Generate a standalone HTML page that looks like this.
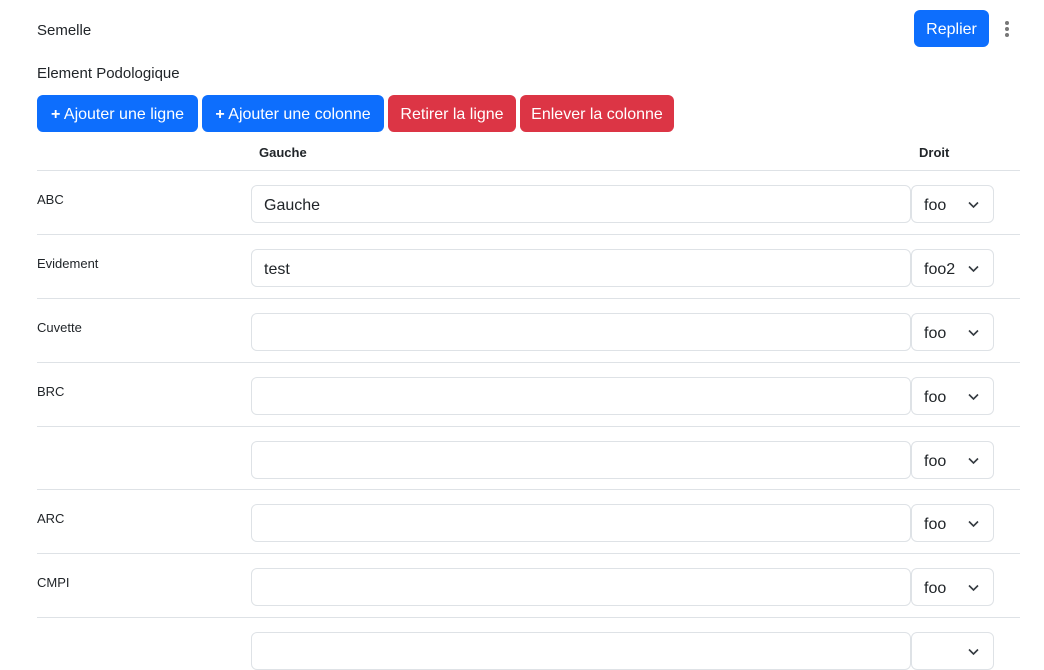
<!DOCTYPE html><html><head><style>
body{margin:0;width:1044px;height:645px;overflow:hidden;background:#fff;font-family:"Liberation Sans",sans-serif;color:#212529;position:relative}
.a{position:absolute}
.btn{position:absolute;top:95px;height:37px;line-height:39px;color:#fff;font-size:16px;border-radius:6px;text-align:center;white-space:nowrap}
.b{background:#0d6efd}.r{background:#dc3545}
.line{position:absolute;left:37px;width:983px;height:1px;background:#dee2e6}
.lab{position:absolute;left:37px;font-size:13px}
.in{position:absolute;left:251px;height:36px;border:1px solid #dee2e6;border-radius:6px;font-size:16px;line-height:40px;padding-left:12px;box-sizing:content-box;width:646px}
.sel{position:absolute;left:911px;border:1px solid #dee2e6;border-radius:6px;font-size:16px;line-height:40px;padding-left:12px;box-sizing:border-box;height:38px;width:83px}
.sel svg{position:absolute;right:14px;top:15px}
</style></head><body>
<div class="a" style="left:37px;top:22px;font-size:15px">Semelle</div>
<div class="a" style="left:37px;top:65px;font-size:15px">Element Podologique</div>
<div class="btn b" style="left:914px;top:10px;width:75px">Replier</div>
<div class="a" style="left:1005px;top:21px;width:4px;height:4px;border-radius:50%;background:#777"></div>
<div class="a" style="left:1005px;top:27px;width:4px;height:4px;border-radius:50%;background:#777"></div>
<div class="a" style="left:1005px;top:33px;width:4px;height:4px;border-radius:50%;background:#777"></div>
<div class="btn b" style="left:37px;width:161px"><b>+</b> Ajouter une ligne</div>
<div class="btn b" style="left:202px;width:182px"><b>+</b> Ajouter une colonne</div>
<div class="btn r" style="left:388px;width:128px">Retirer la ligne</div>
<div class="btn r" style="left:520px;width:154px">Enlever la colonne</div>
<div class="a" style="left:259px;top:145px;font-size:13px;font-weight:bold">Gauche</div>
<div class="a" style="left:919px;top:145px;font-size:13px;font-weight:bold">Droit</div>
<div id="rows"></div>
<script>
var d=[["ABC","Gauche","foo"],["Evidement","test","foo2"],["Cuvette","","foo"],["BRC","","foo"],["","","foo"],["ARC","","foo"],["CMPI","","foo"],["","",""]];
var tops=[170,234,298,362,426,489,553,617],h="";
d.forEach(function(r,i){var t=tops[i];
h+='<div class="line" style="top:'+t+'px"></div>';
h+='<div class="lab" style="top:'+(t+22)+'px">'+r[0]+'</div>';
h+='<div class="in" style="top:'+(t+15)+'px">'+r[1]+'</div>';
h+='<div class="sel" style="top:'+(t+15)+'px">'+r[2]+'<svg width="11" height="8" viewBox="0 0 11 8"><path d="M1 1.5l4.5 4.5 4.5-4.5" fill="none" stroke="#343a40" stroke-width="1.6"/></svg></div>';});
document.getElementById('rows').innerHTML=h;
</script>
</body></html>
